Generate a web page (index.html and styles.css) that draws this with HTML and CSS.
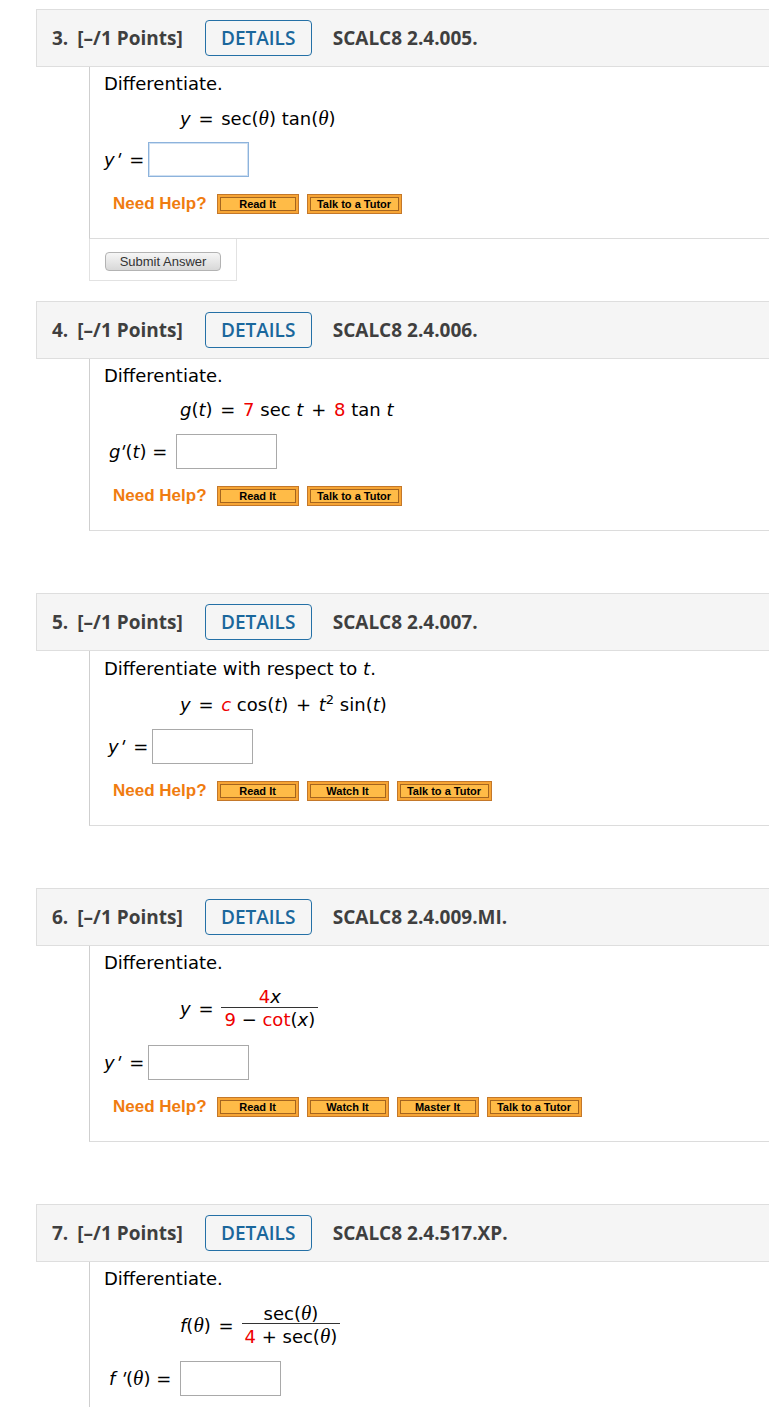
FILE: index.html
```html
<!DOCTYPE html>
<html lang="en">
<head>
<meta charset="utf-8">
<title>Questions</title>
<link rel="stylesheet" href="styles.css">
</head>
<body>
<div class="page">

  <section class="question">
    <div class="q-head">
      <span class="q-num">3.</span><span class="q-pts">[–/1 Points]</span>
      <span class="details">DETAILS</span>
      <span class="q-code">SCALC8 2.4.005.</span>
    </div>
    <div class="q-body">
      <div class="prompt">Differentiate.</div>
      <div class="eq"><i>y</i> <span class="op">=</span> sec(<i class="th">θ</i>) tan(<i class="th">θ</i>)</div>
      <div class="ans"><span class="lbl"><i>y</i><span class="pr">'</span> =</span><span class="box focus"></span></div>
      <div class="help"><span class="need">Need Help?</span><span class="hbtn">Read It</span><span class="hbtn wide">Talk to a Tutor</span></div>
    </div>
    <div class="submit-area"><div class="submit-box"><span class="submit">Submit Answer</span></div></div>
  </section>

  <section class="question">
    <div class="q-head">
      <span class="q-num">4.</span><span class="q-pts">[–/1 Points]</span>
      <span class="details">DETAILS</span>
      <span class="q-code">SCALC8 2.4.006.</span>
    </div>
    <div class="q-body">
      <div class="prompt">Differentiate.</div>
      <div class="eq"><i>g</i>(<i>t</i>) <span class="op">=</span> <span class="red">7</span> sec <i>t</i> <span class="op">+</span> <span class="red">8</span> tan <i>t</i></div>
      <div class="ans in4"><span class="lbl"><i>g</i><span class="pr tight">'</span>(<i>t</i>) =</span><span class="box"></span></div>
      <div class="help"><span class="need">Need Help?</span><span class="hbtn">Read It</span><span class="hbtn wide">Talk to a Tutor</span></div>
    </div>
    <div class="submit-area"></div>
  </section>

  <section class="question shift1">
    <div class="q-head">
      <span class="q-num">5.</span><span class="q-pts">[–/1 Points]</span>
      <span class="details">DETAILS</span>
      <span class="q-code">SCALC8 2.4.007.</span>
    </div>
    <div class="q-body">
      <div class="prompt">Differentiate with respect to <i>t</i>.</div>
      <div class="eq tall"><i>y</i> <span class="op">=</span> <i class="red">c</i> cos(<i>t</i>) <span class="op">+</span> <i>t</i><sup>2</sup> sin(<i>t</i>)</div>
      <div class="ans in5"><span class="lbl"><i>y</i><span class="pr">'</span> =</span><span class="box"></span></div>
      <div class="help"><span class="need">Need Help?</span><span class="hbtn">Read It</span><span class="hbtn">Watch It</span><span class="hbtn wide">Talk to a Tutor</span></div>
    </div>
    <div class="submit-area"></div>
  </section>

  <section class="question">
    <div class="q-head">
      <span class="q-num">6.</span><span class="q-pts">[–/1 Points]</span>
      <span class="details">DETAILS</span>
      <span class="q-code">SCALC8 2.4.009.MI.</span>
    </div>
    <div class="q-body">
      <div class="prompt">Differentiate.</div>
      <div class="eq frac-eq">
        <span class="lhs"><i>y</i> <span class="op">=</span></span>
        <span class="frac">
          <span class="num"><span class="red">4</span><i>x</i></span>
          <span class="den"><span class="red">9</span> − <span class="red">cot</span>(<i>x</i>)</span>
        </span>
      </div>
      <div class="ans"><span class="lbl"><i>y</i><span class="pr">'</span> =</span><span class="box"></span></div>
      <div class="help"><span class="need">Need Help?</span><span class="hbtn">Read It</span><span class="hbtn">Watch It</span><span class="hbtn">Master It</span><span class="hbtn wide">Talk to a Tutor</span></div>
    </div>
    <div class="submit-area"></div>
  </section>

  <section class="question">
    <div class="q-head">
      <span class="q-num">7.</span><span class="q-pts">[–/1 Points]</span>
      <span class="details">DETAILS</span>
      <span class="q-code">SCALC8 2.4.517.XP.</span>
    </div>
    <div class="q-body">
      <div class="prompt">Differentiate.</div>
      <div class="eq frac-eq">
        <span class="lhs"><i>f</i>(<i class="th">θ</i>) <span class="op">=</span></span>
        <span class="frac">
          <span class="num">sec(<i class="th">θ</i>)</span>
          <span class="den"><span class="red">4</span> + sec(<i class="th">θ</i>)</span>
        </span>
      </div>
      <div class="ans in4"><span class="lbl"><i>f</i> <span class="pr tight">'</span>(<i class="th">θ</i>) =</span><span class="box"></span></div>
    </div>
  </section>

</div>
</body>
</html>
```

FILE: styles.css
```css
html, body {
  margin: 0;
  padding: 0;
  background: #ffffff;
  overflow-x: hidden;
}

.page {
  padding: 9px 0 0 36px;
}

/* ---------- header bar ---------- */
.q-head {
  display: flex;
  align-items: center;
  height: 56px;
  padding-left: 15px;
  background: #f5f5f5;
  border: 1px solid #dedede;
  border-right: none;
  font-family: "Open Sans", "DejaVu Sans", sans-serif;
  font-size: 19px;
  font-weight: 700;
  color: #3f3f3f;
}

.q-num {
  margin-right: 9px;
}

.details {
  display: flex;
  align-items: center;
  justify-content: center;
  box-sizing: border-box;
  width: 107px;
  height: 36px;
  margin: 0 21px 0 22px;
  border: 1px solid #2470a6;
  border-radius: 4px;
  color: #1a679c;
  font-weight: 600;
}

/* ---------- question body ---------- */
.q-body {
  margin-left: 53px;
  padding: 7px 0 24px 14px;
  border-left: 1px solid #cfcfcf;
  border-bottom: 1px solid #dcdcdc;
  font-family: "DejaVu Sans", Verdana, sans-serif;
  font-size: 18px;
  line-height: 20px;
  color: #000;
}

.shift1 .q-body {
  padding-top: 8px;
}

.prompt {
  height: 20px;
}

.eq {
  margin: 14px 0 0 76px;
  height: 20px;
  white-space: nowrap;
}

.eq.tall {
  margin-top: 16px;
}

.op {
  margin: 0 2px;
}

.eq sup {
  font-size: 13px;
  line-height: 0;
  vertical-align: 7px;
}

.th {
  font-family: "Liberation Serif", "DejaVu Serif", serif;
  font-size: 21px;
}

.red {
  color: #ee0000;
}

.pr {
  display: inline-block;
  margin-left: 1px;
  margin-right: 3px;
  transform: skewX(-18deg);
}

.pr.tight {
  margin-left: 0;
  margin-right: 0;
}

/* fractions */
.frac-eq {
  display: flex;
  align-items: center;
  height: 44px;
  margin-top: 14px;
}

.lhs {
  margin-right: 6px;
}

.frac {
  display: inline-flex;
  flex-direction: column;
  align-items: stretch;
}

.num {
  text-align: center;
  height: 20px;
  border-bottom: 1px solid #333;
  padding: 0 3px;
}

.den {
  text-align: center;
  height: 21px;
  padding: 2px 3px 0;
}

/* answer rows */
.ans {
  display: flex;
  align-items: center;
  height: 35px;
  margin-top: 14px;
  padding-left: 0;
}

.ans .lbl {
  margin-right: 4px;
}

.ans.in4 {
  padding-left: 5px;
}

.ans.in4 .lbl {
  margin-right: 9px;
}

.ans.in5 {
  padding-left: 4px;
}

.ans.in5 .lbl {
  margin-right: 4px;
}

.lbl {
  white-space: nowrap;
}

.box {
  box-sizing: border-box;
  width: 101px;
  height: 35px;
  border: 1px solid #a9a9a9;
  background: #fff;
}

.box.focus {
  border: 1px solid #8db3dc;
  box-shadow: inset 0 0 0 1px #cfe0f2;
}

/* help row */
.help {
  display: flex;
  align-items: center;
  gap: 8px;
  height: 20px;
  margin: 17px 0 0 9px;
}

.need {
  margin-right: 2px;
  font-family: "Liberation Sans", Arial, sans-serif;
  font-size: 17px;
  font-weight: 700;
  color: #f07c10;
}

.hbtn {
  display: inline-flex;
  align-items: center;
  justify-content: center;
  box-sizing: border-box;
  width: 82px;
  height: 20px;
  border: 1px solid #c4782a;
  background: #ffbb47;
  box-shadow: inset 0 0 0 2px #f7a535, inset 0 0 0 3px #a5651f;
  font-family: "Liberation Sans", Arial, sans-serif;
  font-size: 11px;
  font-weight: 700;
  color: #000;
  line-height: 1;
}

.hbtn.wide {
  width: 95px;
}

/* submit area */
.submit-area {
  height: 42px;
  margin-bottom: 20px;
}

.submit-box {
  box-sizing: border-box;
  width: 148px;
  height: 42px;
  margin-left: 53px;
  padding: 13px 0 0 15px;
  border: 1px solid #e2e2e2;
  border-top: none;
}

.submit {
  display: flex;
  align-items: center;
  justify-content: center;
  box-sizing: border-box;
  width: 116px;
  height: 19px;
  border: 1px solid #b3b3b3;
  border-radius: 4px;
  background: linear-gradient(#f6f6f6, #d8d8d8);
  font-family: "Liberation Sans", Arial, sans-serif;
  font-size: 13px;
  color: #333;
}
```
